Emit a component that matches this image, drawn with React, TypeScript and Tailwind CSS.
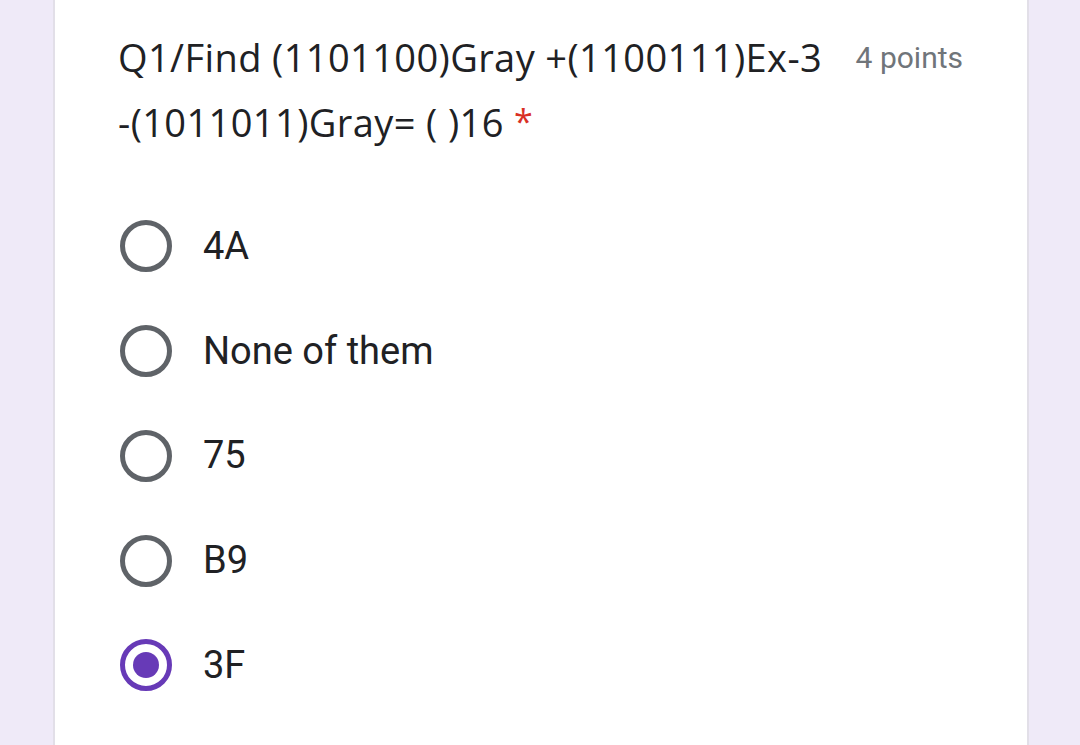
export default function App() {
  const options = ["4A", "None of them", "75", "B9", "3F"];
  const selected = "3F";

  return (
    <div className="w-[1080px] h-[745px] overflow-hidden bg-[#efeaf8]">
      <div className="ml-[53px] w-[976px] h-[745px] bg-white border-x-2 border-[#e2dfe8] pt-[25px] pl-[63px] pr-[64px]">
        <div className="flex items-start gap-5">
          <div
            className="flex-1 text-[38px] leading-[65px] tracking-[0.4px] text-[#202124]"
            style={{ fontFamily: '"Open Sans", sans-serif' }}
          >
            Q1/Find (1101100)Gray +(1100111)Ex-3{" "}
            <span className="whitespace-nowrap">-(1011011)Gray= ( )16</span>{" "}
            <span className="inline-block align-top mt-[14px] text-[34px] leading-none text-[#d93025]">*</span>
          </div>
          <div
            className="shrink-0 text-[30px] leading-[65px] text-[#70757a]"
            style={{ fontFamily: "Roboto, sans-serif" }}
          >
            4 points
          </div>
        </div>

        <div className="mt-[39px] flex flex-col">
          {options.map((opt) => {
            const on = opt === selected;
            return (
              <div key={opt} className="h-[104.75px] flex items-center">
                <div
                  className={
                    on
                      ? "ml-[2px] w-[52px] h-[52px] rounded-full border-[5px] border-[#673ab7] flex items-center justify-center"
                      : "ml-[2px] w-[52px] h-[52px] rounded-full border-[5px] border-[#5f6368]"
                  }
                >
                  {on && <div className="w-[26px] h-[26px] rounded-full bg-[#673ab7]" />}
                </div>
                <span
                  className="ml-[31px] text-[38px] text-[#202124]"
                  style={{ fontFamily: "Roboto, sans-serif" }}
                >
                  {opt}
                </span>
              </div>
            );
          })}
        </div>
      </div>
    </div>
  );
}
